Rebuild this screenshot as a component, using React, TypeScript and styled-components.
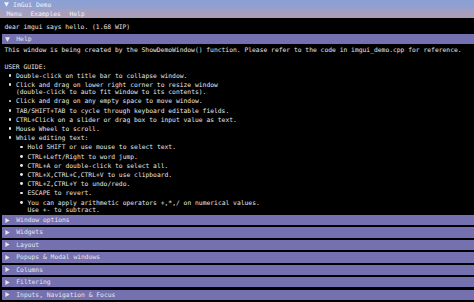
import React from "react";
import styled, { createGlobalStyle } from "styled-components";

const Global = createGlobalStyle`
  html, body { margin: 0; padding: 0; background: #000; }
  body { width: 474px; height: 302px; overflow: hidden; }
  #root { width: 474px; height: 302px; }
`;

const Window = styled.div`
  width: 474px;
  height: 302px;
  overflow: hidden;
  background: #000;
  font-family: "DejaVu Sans Mono", "Liberation Mono", monospace;
  font-size: 6.34px;
  color: #e6e6e6;
  display: flex;
  flex-direction: column;
`;

const TitleBar = styled.div`
  flex: none;
  height: 9.2px;
  display: flex;
  align-items: center;
  gap: 4.5px;
  padding-left: 3.6px;
  background: linear-gradient(#8aa0d6, #95a0cb);
  color: #eef0fa;
  line-height: 9.2px;
  white-space: pre;
`;

const MenuBar = styled.div`
  flex: none;
  height: 9.1px;
  display: flex;
  align-items: center;
  gap: 4.34px;
  padding-left: 4.34px;
  background: linear-gradient(#9f9fc4, #ac9cb3);
  line-height: 9.1px;
`;

const MenuItem = styled.span`
  padding: 0 2.17px;
  color: #f0eef6;
  white-space: pre;
`;

const Content = styled.div`
  flex: 1;
  display: flex;
  flex-direction: column;
  gap: 2.17px;
  padding: 4.4px 0 0 4.4px;
`;

const Line = styled.div<{ $lines?: number }>`
  line-height: 7.05px;
  height: ${(p) => (p.$lines ?? 1) * 7.05}px;
  white-space: pre;
`;

const Spacer = styled.div`
  height: 0;
`;

const Header = styled.div`
  flex: none;
  height: 10.31px;
  margin: 0 -4px 0 -2.9px;
  display: flex;
  align-items: center;
  background: #7571b0;
  line-height: 10.31px;
  white-space: pre;
`;

const ArrowSlot = styled.span`
  flex: none;
  width: 14.8px;
  display: flex;
  align-items: center;
  padding-left: 3.5px;
  box-sizing: border-box;
`;

const BulletRow = styled.div`
  display: flex;
  align-items: flex-start;
`;

const DotSlot = styled.span`
  flex: none;
  width: 11.5px;
  height: 7.05px;
  display: flex;
  align-items: center;
  padding-left: 4.3px;
  box-sizing: border-box;
`;

const Dot = styled.span`
  width: 2.8px;
  height: 2.8px;
  border-radius: 50%;
  background: #e6e6e6;
`;

const Indent = styled.div`
  display: flex;
  flex-direction: column;
  gap: 2.17px;
  padding-left: 11.5px;
`;

const Down = ({ color = "#e6e6e6" }: { color?: string }) => (
  <svg width="5" height="5" viewBox="0 0 5 5">
    <polygon points="0,0.35 5,0.35 2.5,4.65" fill={color} />
  </svg>
);

const Right = () => (
  <svg width="5" height="5" viewBox="0 0 5 5">
    <polygon points="0.35,0 4.65,2.5 0.35,5" fill="#e6e6e6" />
  </svg>
);

const Bullet = ({ children }: { children: string }) => {
  const lines = children.split("\n");
  return (
    <BulletRow>
      <DotSlot>
        <Dot />
      </DotSlot>
      <Line $lines={lines.length}>{children}</Line>
    </BulletRow>
  );
};

const headers = [
  "Window options",
  "Widgets",
  "Layout",
  "Popups & Modal windows",
  "Columns",
  "Filtering",
  "Inputs, Navigation & Focus",
];

export default function App() {
  return (
    <>
      <Global />
      <Window>
        <TitleBar>
          <Down color="#eef0fa" />
          <span>ImGui Demo</span>
        </TitleBar>
        <MenuBar>
          <MenuItem>Menu</MenuItem>
          <MenuItem>Examples</MenuItem>
          <MenuItem>Help</MenuItem>
        </MenuBar>
        <Content>
          <Line>dear imgui says hello. (1.68 WIP)</Line>
          <Spacer />
          <Header>
            <ArrowSlot>
              <Down />
            </ArrowSlot>
            Help
          </Header>
          <Line $lines={2}>
            This window is being created by the ShowDemoWindow() function. Please refer to the code in imgui_demo.cpp for reference.
          </Line>
          <Line>USER GUIDE:</Line>
          <Bullet>Double-click on title bar to collapse window.</Bullet>
          <Bullet>{"Click and drag on lower right corner to resize window\n(double-click to auto fit window to its contents)."}</Bullet>
          <Bullet>Click and drag on any empty space to move window.</Bullet>
          <Bullet>TAB/SHIFT+TAB to cycle through keyboard editable fields.</Bullet>
          <Bullet>CTRL+Click on a slider or drag box to input value as text.</Bullet>
          <Bullet>Mouse Wheel to scroll.</Bullet>
          <Bullet>While editing text:</Bullet>
          <Indent>
            <Bullet>Hold SHIFT or use mouse to select text.</Bullet>
            <Bullet>CTRL+Left/Right to word jump.</Bullet>
            <Bullet>CTRL+A or double-click to select all.</Bullet>
            <Bullet>CTRL+X,CTRL+C,CTRL+V to use clipboard.</Bullet>
            <Bullet>CTRL+Z,CTRL+Y to undo/redo.</Bullet>
            <Bullet>ESCAPE to revert.</Bullet>
            <Bullet>{"You can apply arithmetic operators +,*,/ on numerical values.\nUse +- to subtract."}</Bullet>
          </Indent>
          {headers.map((h) => (
            <Header key={h}>
              <ArrowSlot>
                <Right />
              </ArrowSlot>
              {h}
            </Header>
          ))}
        </Content>
      </Window>
    </>
  );
}
